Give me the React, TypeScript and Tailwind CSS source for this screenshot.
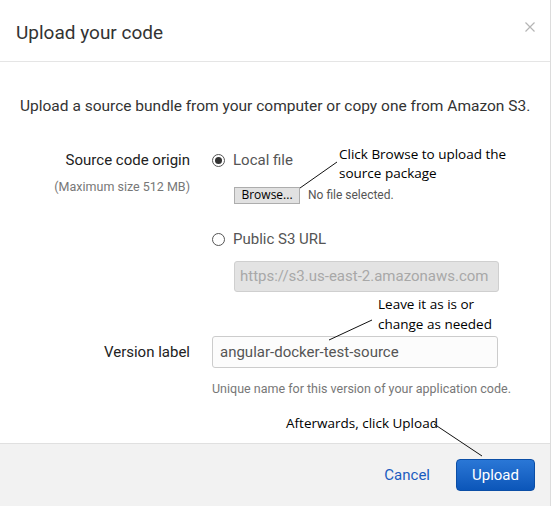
import React from "react";

const roboto = { fontFamily: "Roboto, 'Liberation Sans', Arial, sans-serif" };
const anno = { fontFamily: "'Open Sans', 'Noto Sans', sans-serif" };

function Radio({ checked }: { checked?: boolean }) {
  return (
    <span className="flex h-[13px] w-[13px] items-center justify-center rounded-full border border-[#555] bg-white">
      {checked && <span className="h-[7px] w-[7px] rounded-full bg-[#333]" />}
    </span>
  );
}

export default function App() {
  return (
    <div className="relative flex h-[506px] w-[551px] flex-col border-r border-[#dcdcdc] bg-white" style={roboto}>
      <div className="flex h-[62px] shrink-0 items-start justify-between border-b border-[#e5e5e5] pl-[16px] pr-[15px]">
        <div className="pt-[19px] text-[19px] leading-[28px] text-[#333]">Upload your code</div>
        <svg className="mt-[22px]" width="10" height="10" viewBox="0 0 10 10">
          <path d="M0.5 0.5 L9.5 9.5 M9.5 0.5 L0.5 9.5" stroke="#b5b5b5" strokeWidth="1.2" />
        </svg>
      </div>

      <div className="flex-1">
        <p className="pl-[20px] pt-[34px] text-[15.5px] leading-[20px] text-[#333]">
          Upload a source bundle from your computer or copy one from Amazon S3.
        </p>

        <div className="mt-[33px] flex">
          <div className="flex w-[190px] flex-col items-end">
            <div className="text-[15px] leading-[22px] text-[#222]">Source code origin</div>
            <div className="mt-[8px] text-[12.5px] leading-[16px] text-[#777]">(Maximum size 512 MB)</div>
          </div>
          <div className="ml-[22px] flex flex-col">
            <div className="flex h-[22px] items-center gap-[8px]">
              <Radio checked />
              <span className="text-[15px] text-[#555]">Local file</span>
            </div>
            <div className="ml-[22px] mt-[15px] flex items-center gap-[8px]">
              <span
                className="flex h-[17px] w-[66px] items-center justify-center border border-[#adadad] bg-[#e1e1e1] text-[12px] text-black"
                style={anno}
              >
                Browse...
              </span>
              <span className="text-[12px] text-[#555]">No file selected.</span>
            </div>
            <div className="mt-[24px] flex h-[22px] items-center gap-[8px]">
              <Radio />
              <span className="text-[15px] text-[#555]">Public S3 URL</span>
            </div>
            <div className="ml-[22px] mt-[11px] flex h-[31px] w-[265px] items-center rounded-[3px] border border-[#cfcfcf] bg-[#e3e3e3] pl-[5px] text-[15px] text-[#a8a8a8]">
              https://s3.us-east-2.amazonaws.com
            </div>
          </div>
        </div>

        <div className="mt-[44px] flex">
          <div className="flex h-[32px] w-[190px] items-center justify-end text-[15px] text-[#222]">Version label</div>
          <div className="ml-[22px] flex flex-col">
            <div className="flex h-[32px] w-[286px] items-center rounded-[3px] border border-[#ccc] bg-[#fcfcfc] pl-[7px] text-[15px] text-[#555]">
              angular-docker-test-source
            </div>
            <div className="mt-[13px] text-[12.5px] leading-[16px] text-[#777]">
              Unique name for this version of your application code.
            </div>
          </div>
        </div>
      </div>

      <div className="flex h-[63px] shrink-0 items-center justify-end gap-[26px] border-t border-[#e0e0e0] bg-[#f2f2f2] pr-[15px]">
        <span className="text-[15px] text-[#1a5cbf]">Cancel</span>
        <span className="flex h-[32px] w-[79px] items-center justify-center rounded-[4px] border border-[#0b4ea6] bg-gradient-to-b from-[#2a77d6] to-[#0b56b9] text-[15px] text-white">
          Upload
        </span>
      </div>

      <div className="pointer-events-none absolute left-[339px] top-[145px] text-[13.5px] leading-[19px] text-black" style={anno}>
        Click Browse to upload the
        <br />
        source package
      </div>
      <div className="pointer-events-none absolute left-[378px] top-[294px] text-[13.5px] leading-[20px] text-black" style={anno}>
        Leave it as is or
        <br />
        change as needed
      </div>
      <div className="pointer-events-none absolute left-[286px] top-[414px] text-[13.5px] leading-[19px] text-black" style={anno}>
        Afterwards, click Upload
      </div>
      <svg className="pointer-events-none absolute left-0 top-0" width="551" height="506">
        <line x1="337" y1="162" x2="300" y2="188" stroke="#111" strokeWidth="1" />
        <line x1="372" y1="320" x2="329" y2="340" stroke="#111" strokeWidth="1" />
        <line x1="434" y1="424" x2="482" y2="456" stroke="#111" strokeWidth="1" />
      </svg>
    </div>
  );
}
